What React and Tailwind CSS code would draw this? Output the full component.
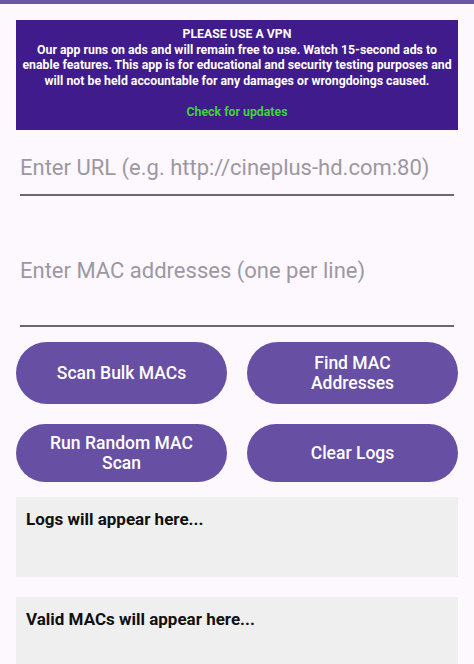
export default function App() {
  const buttons = [
    { label: "Scan Bulk MACs", h: "h-[62px]" },
    { label: "Find MAC Addresses", h: "h-[62px]" },
    { label: "Run Random MAC Scan", h: "h-[58px]" },
    { label: "Clear Logs", h: "h-[58px]" },
  ]

  return (
    <div className="min-h-screen bg-[#fdf7fe] font-['Roboto',sans-serif]">
      <div className="h-[4px] bg-[#6a56a6]" />

      <div className="px-4 pt-4">
        {/* notice banner */}
        <div className="bg-[#3f1b8b] px-1 pt-[7px] pb-[10px] text-center text-[12.3px] font-bold leading-[15.5px] text-white">
          <p>PLEASE USE A VPN</p>
          <p>
            Our app runs on ads and will remain free to use. Watch 15-second ads to enable features. This app is for
            educational and security testing purposes and will not be held accountable for any damages or wrongdoings
            caused.
          </p>
          <p className="mt-[15.5px] text-[#3fd33a]">Check for updates</p>
        </div>

        {/* url field */}
        <div className="mx-1 border-b-2 border-[#6b6670] pt-[24px] pb-[12px] text-[22px] leading-[28px] text-[#9d97a1]">
          Enter URL (e.g. http://cineplus-hd.com:80)
        </div>

        {/* mac list field */}
        <div className="mx-1 border-b-2 border-[#6b6670] pt-[61px] pb-[40px] text-[22px] leading-[28px] text-[#9d97a1]">
          Enter MAC addresses (one per line)
        </div>

        <div className="mt-[15px] grid grid-cols-2 gap-5">
          {buttons.map((b) => (
            <button
              key={b.label}
              className={`${b.h} flex items-center justify-center rounded-full bg-[#6750a4] px-[30px] text-center text-[17.5px] font-medium leading-[20px] text-white`}
            >
              {b.label}
            </button>
          ))}
        </div>

        <div className="mt-[15px] h-[80px] bg-[#efefef] px-[10px] pt-[12px] text-[17px] font-bold leading-[20px] text-[#111]">
          Logs will appear here...
        </div>
        <div className="mt-5 h-[80px] bg-[#efefef] px-[10px] pt-[12px] text-[17px] font-bold leading-[20px] text-[#111]">
          Valid MACs will appear here...
        </div>
      </div>
    </div>
  )
}
